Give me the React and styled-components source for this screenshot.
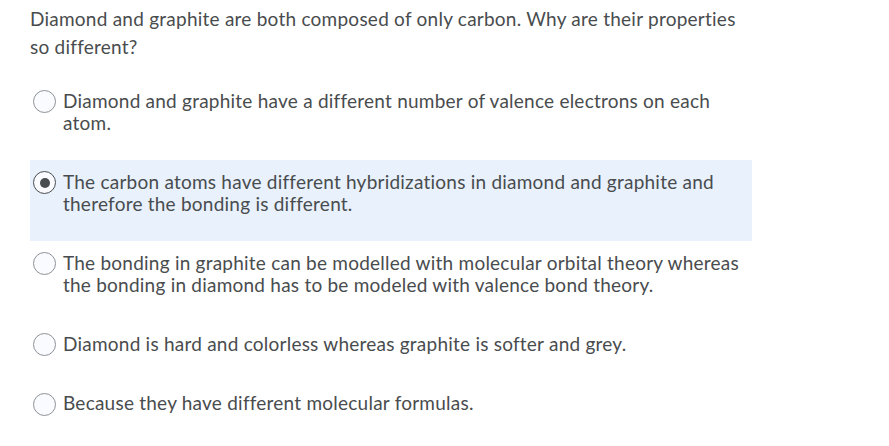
import React from 'react';
import styled, { createGlobalStyle } from 'styled-components';

const GlobalStyle = createGlobalStyle`
    body {
        margin: 0;
        background: #ffffff;
        font-family: Lato, "Open Sans", sans-serif;
        color: #494c4e;
        font-variant-ligatures: none;
    }
`;

const Page = styled.div`
    width: 722px;
    padding: 4.5px 0 0 30px;
`;

const Question = styled.div`
    font-size: 19px;
    letter-spacing: 0.24px;
    line-height: 28.8px;
    margin-bottom: 17px;
`;

const Option = styled.label`
    display: flex;
    align-items: flex-start;
    gap: 7px;
    padding: 10.5px 8px 25.5px 3px;
    background: ${props => (props.selected ? '#e8f1fc' : 'transparent')};
    cursor: pointer;
`;

const Radio = styled.span`
    flex: none;
    box-sizing: border-box;
    width: 23px;
    height: 23px;
    margin-top: 0.5px;
    border-radius: 50%;
    border: 1px solid ${props => (props.checked ? '#494c4e' : '#8d9296')};
    background: #f9fbff;
    display: flex;
    align-items: center;
    justify-content: center;

    &::after {
        content: '';
        display: ${props => (props.checked ? 'block' : 'none')};
        width: 10px;
        height: 10px;
        border-radius: 50%;
        background: #494c4e;
    }
`;

const Text = styled.span`
    font-size: 19px;
    letter-spacing: 0.23px;
    line-height: 22.5px;
`;

const options = [
    'Diamond and graphite have a different number of valence electrons on each atom.',
    'The carbon atoms have different hybridizations in diamond and graphite and therefore the bonding is different.',
    'The bonding in graphite can be modelled with molecular orbital theory whereas the bonding in diamond has to be modeled with valence bond theory.',
    'Diamond is hard and colorless whereas graphite is softer and grey.',
    'Because they have different molecular formulas.',
];

export default function App() {
    const selected = 1;
    return (
        <Page>
            <GlobalStyle />
            <Question>
                Diamond and graphite are both composed of only carbon. Why are their properties so different?
            </Question>
            {options.map((text, i) => (
                <Option key={i} selected={i === selected}>
                    <Radio checked={i === selected} />
                    <Text>{text}</Text>
                </Option>
            ))}
        </Page>
    );
}
